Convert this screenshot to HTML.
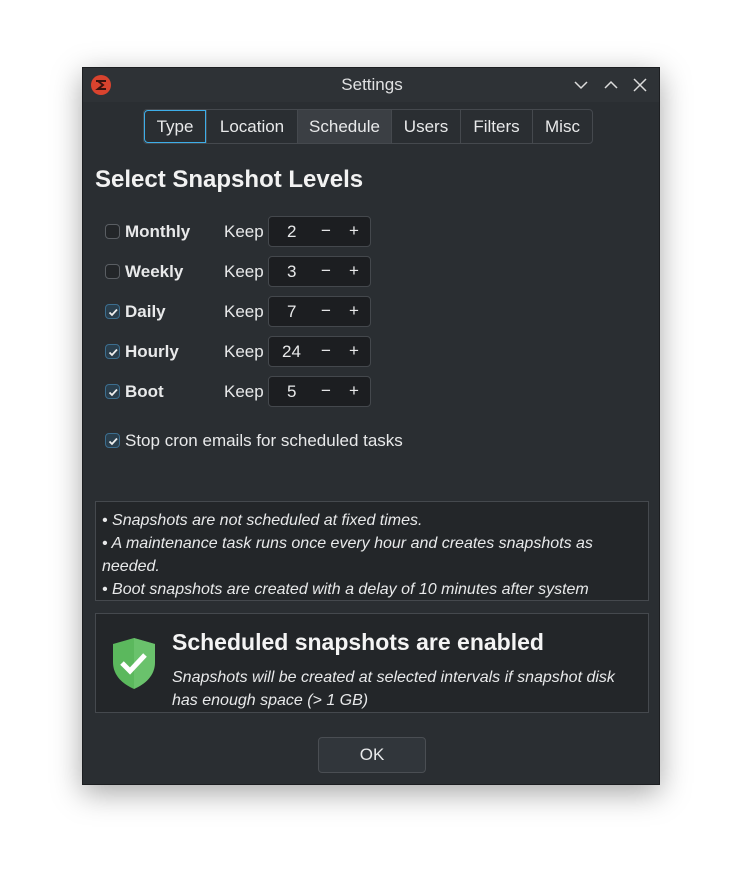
<!DOCTYPE html>
<html><head><style>
body{margin:0;width:744px;height:884px;background:#fff;position:relative;font-family:"Liberation Sans","DejaVu Sans",sans-serif;color:#e8e9ea;overflow:hidden}
.win{position:absolute;left:82px;top:67px;width:578px;height:718px;background:#2a2e32;box-shadow:0 8px 28px rgba(0,0,0,.35);border:1px solid #1c1e21;box-sizing:border-box}
.tb{position:absolute;left:0;top:0;width:100%;height:34px;background:#2e3236;}
.abs{position:absolute}
.tabs{position:absolute;left:60px;top:41px;height:35px;display:flex;border:1px solid #45494e;border-radius:4px;overflow:hidden;box-sizing:border-box}
.tabs div{height:33px;line-height:33px;font-size:17px;text-align:center;border-left:1px solid #45494e;box-sizing:border-box}
.cb{position:absolute;left:22px;width:15px;height:15px;border:1px solid #5a5e63;border-radius:4px;box-sizing:border-box;background:#232629}
.cb.on{border-color:#3c6e8f;background:#2a3e4c}
.lbl{position:absolute;left:42px;font-size:17px;font-weight:bold}
.keep{position:absolute;left:141px;font-size:17px}
.spin{position:absolute;left:185px;width:103px;height:31px;background:#1c1e21;border:1px solid #44484d;border-radius:4px;box-sizing:border-box;font-size:17px}
.box{position:absolute;left:12px;width:554px;border:1px solid #45494e;background:#232629;box-sizing:border-box}
</style></head><body>
<div class="win">
<div class="tb">
<svg class="abs" style="left:7px;top:6px" width="22" height="22" viewBox="0 0 22 22"><circle cx="11" cy="11" r="10" fill="#d9432e"/><path d="M6 7h10M8 7l5 4-5 4h8" stroke="#3a1410" stroke-width="2" fill="none"/></svg>
<div class="abs" style="left:0;width:578px;top:7px;text-align:center;font-size:17px;color:#e0e1e2">Settings</div>
<svg class="abs" style="left:490px;top:9px" width="80" height="16" viewBox="0 0 80 16"><path d="M2 5l6 6 6-6M32 11l6-6 6 6M61 2l12 12M73 2L61 14" stroke="#dcdcdc" stroke-width="1.5" fill="none"/></svg>
</div>
<div class="tabs">
<div style="width:62px;border:1px solid #3daee9;border-radius:4px 0 0 4px;line-height:31px">Type</div>
<div style="width:91px">Location</div>
<div style="width:94px;background:#3b3f44">Schedule</div>
<div style="width:69px">Users</div>
<div style="width:72px">Filters</div>
<div style="width:60px">Misc</div>
</div>
<div class="abs" style="left:12px;top:98px;font-size:24px;font-weight:bold;color:#f2f2f2">Select Snapshot Levels</div>

<div class="cb" style="top:156px"></div><div class="lbl" style="top:154px">Monthly</div><div class="keep" style="top:154px">Keep</div>
<div class="spin" style="top:148px"><span class="abs" style="left:18px;top:5px">2</span><span class="abs" style="left:52px;top:4px">−</span><span class="abs" style="left:80px;top:4px">+</span></div>
<div class="cb" style="top:196px"></div><div class="lbl" style="top:194px">Weekly</div><div class="keep" style="top:194px">Keep</div>
<div class="spin" style="top:188px"><span class="abs" style="left:18px;top:5px">3</span><span class="abs" style="left:52px;top:4px">−</span><span class="abs" style="left:80px;top:4px">+</span></div>
<div class="cb on" style="top:236px"><svg class="abs" style="left:1px;top:1px" width="12" height="12"><path d="M2.5 6.5l2.5 2.5 5-5.5" stroke="#eee" stroke-width="1.8" fill="none"/></svg></div><div class="lbl" style="top:234px">Daily</div><div class="keep" style="top:234px">Keep</div>
<div class="spin" style="top:228px"><span class="abs" style="left:18px;top:5px">7</span><span class="abs" style="left:52px;top:4px">−</span><span class="abs" style="left:80px;top:4px">+</span></div>
<div class="cb on" style="top:276px"><svg class="abs" style="left:1px;top:1px" width="12" height="12"><path d="M2.5 6.5l2.5 2.5 5-5.5" stroke="#eee" stroke-width="1.8" fill="none"/></svg></div><div class="lbl" style="top:274px">Hourly</div><div class="keep" style="top:274px">Keep</div>
<div class="spin" style="top:268px"><span class="abs" style="left:13px;top:5px">24</span><span class="abs" style="left:52px;top:4px">−</span><span class="abs" style="left:80px;top:4px">+</span></div>
<div class="cb on" style="top:316px"><svg class="abs" style="left:1px;top:1px" width="12" height="12"><path d="M2.5 6.5l2.5 2.5 5-5.5" stroke="#eee" stroke-width="1.8" fill="none"/></svg></div><div class="lbl" style="top:314px">Boot</div><div class="keep" style="top:314px">Keep</div>
<div class="spin" style="top:308px"><span class="abs" style="left:18px;top:5px">5</span><span class="abs" style="left:52px;top:4px">−</span><span class="abs" style="left:80px;top:4px">+</span></div>

<div class="cb on" style="top:365px"><svg class="abs" style="left:1px;top:1px" width="12" height="12"><path d="M2.5 6.5l2.5 2.5 5-5.5" stroke="#eee" stroke-width="1.8" fill="none"/></svg></div><div class="abs" style="left:42px;top:363px;font-size:17px">Stop cron emails for scheduled tasks</div>

<div class="box" style="top:433px;height:100px;overflow:hidden;font-size:16px;font-style:italic;line-height:23px;padding:7px 6px 0;">• Snapshots are not scheduled at fixed times.<br>• A maintenance task runs once every hour and creates snapshots as needed.<br>• Boot snapshots are created with a delay of 10 minutes after system</div>

<div class="box" style="top:545px;height:100px">
<svg class="abs" style="left:15px;top:22px" width="46" height="54" viewBox="0 0 46 54"><path d="M23 2L44 8v18c0 14-10 22-21 27C12 48 2 40 2 26V8z" fill="#5bb85d"/><path d="M23 2L44 8v18c0 14-10 22-21 27z" fill="#74c876" opacity=".6"/><path d="M11 27l8 8 15-16" stroke="#fff" stroke-width="5" fill="none"/></svg>
<div class="abs" style="left:76px;top:15px;font-size:23px;font-weight:bold;color:#f4f4f4">Scheduled snapshots are enabled</div>
<div class="abs" style="left:76px;top:52px;font-size:16px;font-style:italic;line-height:23px;width:470px">Snapshots will be created at selected intervals if snapshot disk has enough space (&gt; 1 GB)</div>
</div>

<div class="abs" style="left:235px;top:669px;width:108px;height:36px;border:1px solid #4a4e53;border-radius:4px;background:#31363b;box-sizing:border-box;text-align:center;line-height:34px;font-size:17px">OK</div>
</div>
</body></html>
